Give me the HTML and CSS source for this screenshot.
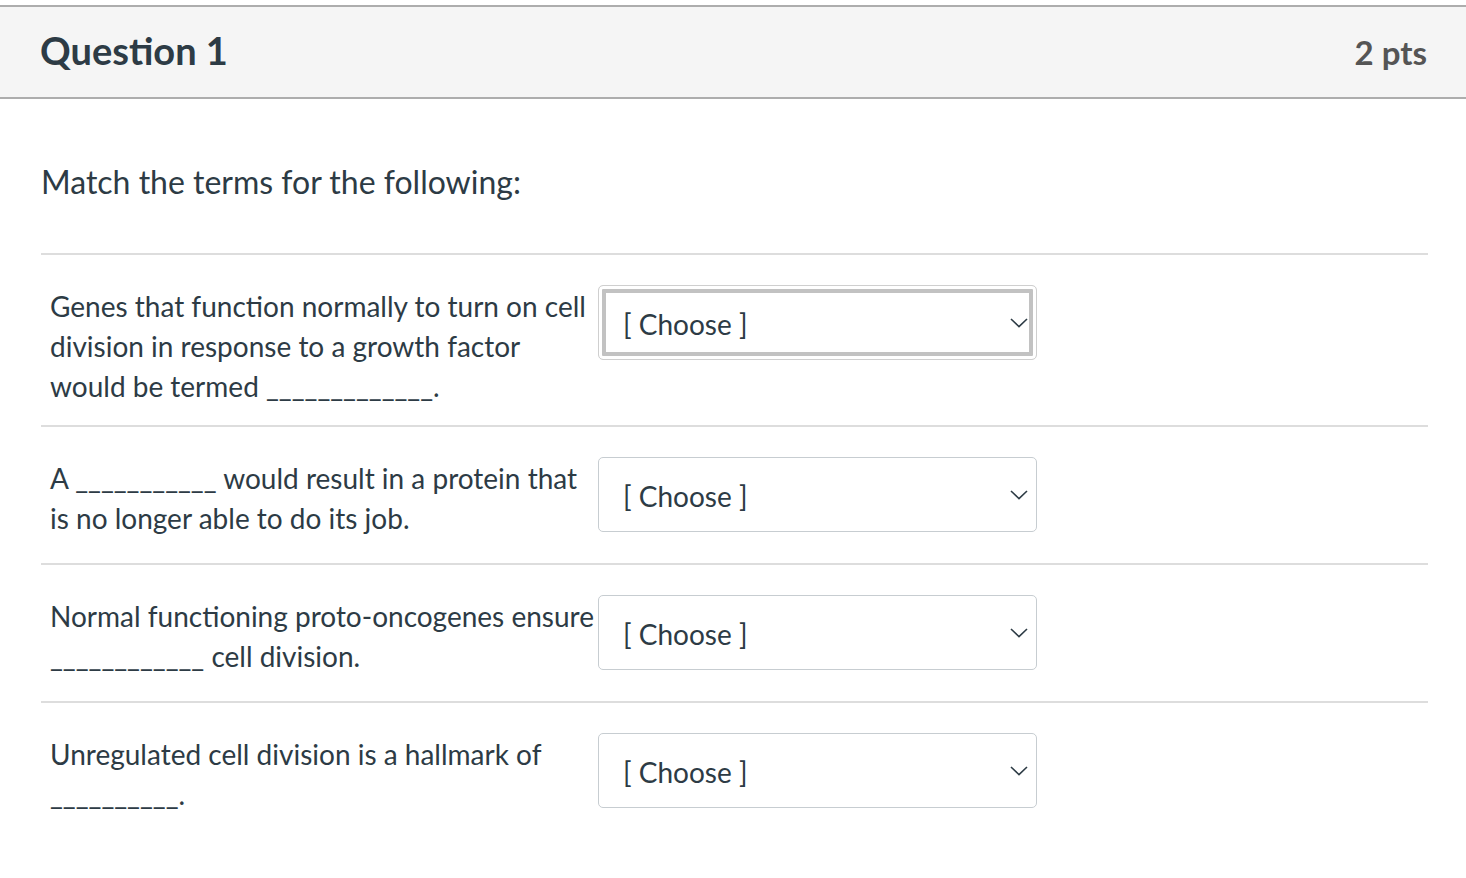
FILE: index.html
```html
<!DOCTYPE html>
<html lang="en">
<head>
<meta charset="utf-8">
<title>Question 1</title>
<link rel="stylesheet" href="styles.css">
</head>
<body>
<div class="question">
  <div class="q-header">
    <h2 class="q-title">Question 1</h2>
    <div class="q-points">2 pts</div>
  </div>
  <div class="q-body">
    <p class="prompt">Match the terms for the following:</p>
    <div class="matches">
      <div class="match-row first">
        <div class="match-text">Genes that function normally to turn on cell division in response to a growth factor would be termed _____________.</div>
        <div class="select focused"><span class="select-label">[ Choose ]</span><svg class="chev" width="18" height="10" viewBox="0 0 18 10"><polyline points="1,1 9,8.6 17,1" fill="none" stroke="#2d3b45" stroke-width="1.6"/></svg></div>
      </div>
      <div class="match-row">
        <div class="match-text">A ___________ would result in a protein that is no longer able to do its job.</div>
        <div class="select"><span class="select-label">[ Choose ]</span><svg class="chev" width="18" height="10" viewBox="0 0 18 10"><polyline points="1,1 9,8.6 17,1" fill="none" stroke="#2d3b45" stroke-width="1.6"/></svg></div>
      </div>
      <div class="match-row">
        <div class="match-text">Normal functioning proto-oncogenes ensure ____________ cell division.</div>
        <div class="select"><span class="select-label">[ Choose ]</span><svg class="chev" width="18" height="10" viewBox="0 0 18 10"><polyline points="1,1 9,8.6 17,1" fill="none" stroke="#2d3b45" stroke-width="1.6"/></svg></div>
      </div>
      <div class="match-row">
        <div class="match-text">Unregulated cell division is a hallmark of __________.</div>
        <div class="select"><span class="select-label">[ Choose ]</span><svg class="chev" width="18" height="10" viewBox="0 0 18 10"><polyline points="1,1 9,8.6 17,1" fill="none" stroke="#2d3b45" stroke-width="1.6"/></svg></div>
      </div>
    </div>
  </div>
</div>
</body>
</html>
```

FILE: styles.css
```css
* { box-sizing: border-box; }
html, body { margin: 0; padding: 0; background: #fff; }
body {
  font-family: Lato, "Open Sans", sans-serif;
  color: #2d3b45;
}
.question { padding-top: 5px; }
.q-header {
  display: flex;
  align-items: baseline;
  justify-content: space-between;
  height: 94px;
  padding: 21px 39px 0 40px;
  background: #f5f5f5;
  border-top: 2px solid #adadad;
  border-bottom: 2px solid #adadad;
}
.q-title {
  margin: 0;
  font-size: 38px;
  font-weight: 700;
  line-height: 1.2;
  color: #2d3b45;
}
.q-points {
  font-size: 33px;
  font-weight: 700;
  line-height: 1.2;
  color: #555;
}
.q-body { padding: 0 38px 0 41px; }
.prompt {
  margin: 64px 0 52px;
  font-size: 32px;
  line-height: 38px;
}
.match-row {
  display: flex;
  align-items: flex-start;
  border-top: 2px solid #ddd;
  padding: 31px 0 18px 9px;
}
.match-row.first { padding-bottom: 19px; }
.match-text {
  width: 548px;
  font-size: 28px;
  line-height: 40px;
}
.select {
  display: flex;
  align-items: center;
  width: 439px;
  height: 75px;
  margin-top: -1px;
  margin-bottom: 13px;
  padding: 0 8px 0 24px;
  border: 1px solid #c7cdd1;
  border-radius: 5px;
  background: #fff;
}
.select.focused {
  border-color: #cfcfcf;
  box-shadow: inset 0 0 0 3px #fff, inset 0 0 0 7px #c2c2c2;
}
.select-label {
  font-size: 28px;
  line-height: 1.2;
  padding-top: 5px;
}
.chev { margin-left: auto; display: block; }
```
